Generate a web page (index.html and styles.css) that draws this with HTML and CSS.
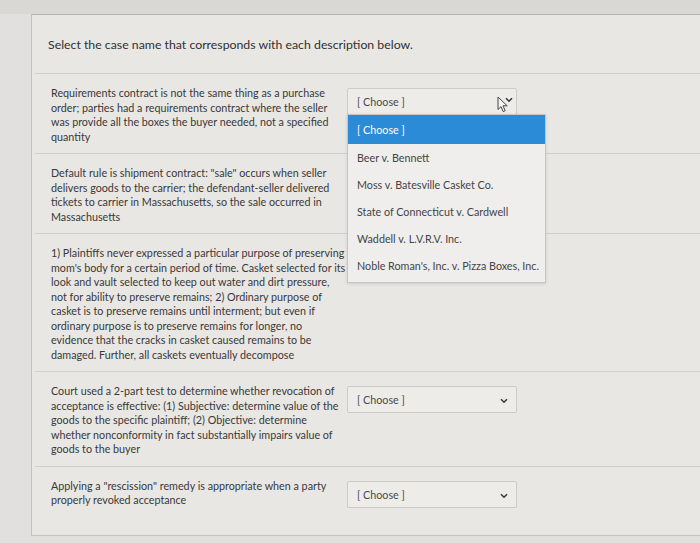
FILE: index.html
```html
<!DOCTYPE html>
<html>
<head>
<meta charset="utf-8">
<link rel="stylesheet" href="styles.css">
</head>
<body>
<div class="page">
  <div class="panel">
    <div class="title">Select the case name that corresponds with each description below.</div>
    <div class="rows">
      <div class="row">
        <div class="desc">Requirements contract is not the same thing as a purchase<br>order; parties had a requirements contract where the seller<br>was provide all the boxes the buyer needed, not a specified<br>quantity</div>
        <div class="select-wrap">
          <div class="select open">
            <span>[ Choose ]</span>
            <svg class="chev" width="8" height="6" viewBox="0 0 8 6"><path d="M1 1.2 L4 4.2 L7 1.2" fill="none" stroke="#3a3a3a" stroke-width="1.6"/></svg>
            <svg class="cursor" width="12" height="17" viewBox="0 0 12 17"><path d="M1 1 L1 13.5 L4 10.6 L6.2 15.6 L8.2 14.7 L6 9.8 L10.2 9.8 Z" fill="#f4f4f4" stroke="#444" stroke-width="1" stroke-linejoin="round"/></svg>
          </div>
          <ul class="menu">
            <li class="active">[ Choose ]</li>
            <li>Beer v. Bennett</li>
            <li>Moss v. Batesville Casket Co.</li>
            <li>State of Connecticut v. Cardwell</li>
            <li>Waddell v. L.V.R.V. Inc.</li>
            <li>Noble Roman's, Inc. v. Pizza Boxes, Inc.</li>
          </ul>
        </div>
      </div>
      <div class="row">
        <div class="desc">Default rule is shipment contract: "sale" occurs when seller<br>delivers goods to the carrier; the defendant-seller delivered<br>tickets to carrier in Massachusetts, so the sale occurred in<br>Massachusetts</div>
      </div>
      <div class="row">
        <div class="desc">1) Plaintiffs never expressed a particular purpose of preserving<br>mom's body for a certain period of time. Casket selected for its<br>look and vault selected to keep out water and dirt pressure,<br>not for ability to preserve remains; 2) Ordinary purpose of<br>casket is to preserve remains until interment; but even if<br>ordinary purpose is to preserve remains for longer, no<br>evidence that the cracks in casket caused remains to be<br>damaged. Further, all caskets eventually decompose</div>
      </div>
      <div class="row">
        <div class="desc">Court used a 2-part test to determine whether revocation of<br>acceptance is effective: (1) Subjective: determine value of the<br>goods to the specific plaintiff; (2) Objective: determine<br>whether nonconformity in fact substantially impairs value of<br>goods to the buyer</div>
        <div class="select-wrap">
          <div class="select">
            <span>[ Choose ]</span>
            <svg class="chev" width="8" height="6" viewBox="0 0 8 6"><path d="M1 1.2 L4 4.2 L7 1.2" fill="none" stroke="#3a3a3a" stroke-width="1.6"/></svg>
          </div>
        </div>
      </div>
      <div class="row last">
        <div class="desc">Applying a "rescission" remedy is appropriate when a party<br>properly revoked acceptance</div>
        <div class="select-wrap">
          <div class="select">
            <span>[ Choose ]</span>
            <svg class="chev" width="8" height="6" viewBox="0 0 8 6"><path d="M1 1.2 L4 4.2 L7 1.2" fill="none" stroke="#3a3a3a" stroke-width="1.6"/></svg>
          </div>
        </div>
      </div>
    </div>
  </div>
</div>
</body>
</html>
```
FILE: styles.css
```css
html, body {
  margin: 0;
  padding: 0;
}
body {
  background: #e1e0de;
  font-family: Lato, "Open Sans", sans-serif;
  color: #3b3b3b;
  width: 700px;
  height: 543px;
  overflow: hidden;
}
.page {
  padding-top: 14px;
  background: linear-gradient(#dad8d5, #dad8d5) top / 100% 14px no-repeat;
}
.panel {
  margin-left: 31px;
  border-left: 1px solid #c4c2bf;
  border-top: 1px solid #b5b3b0;
  border-bottom: 1px solid #c4c2bf;
  background: #e9e7e4;
  height: 522px;
  box-sizing: border-box;
}
.title {
  font-size: 12.3px;
  line-height: 16px;
  padding: 22px 0 20px 16px;
  color: #303030;
}
.rows {
  margin-left: 3px;
}
.row {
  display: flex;
  border-top: 1px solid #d1cfcc;
  padding: 12px 0 9px 16px;
}
.row.last {
  padding-bottom: 26px;
}
.desc {
  width: 296px;
  flex-shrink: 0;
  font-size: 10.75px;
  line-height: 14.5px;
  white-space: nowrap;
  color: #383838;
}
.select-wrap {
  position: relative;
  padding-top: 2px;
}
.select {
  position: relative;
  width: 170px;
  height: 27px;
  box-sizing: border-box;
  border: 1px solid #cdcbc8;
  border-radius: 2px;
  background: #eeece9;
  display: flex;
  align-items: center;
  padding-left: 9px;
  font-size: 10.75px;
  color: #4a4a4a;
}
.chev {
  position: absolute;
  right: 8px;
  top: 11px;
}
.select.open .chev {
  right: 3px;
  top: 8px;
}
.cursor {
  position: absolute;
  left: 149px;
  top: 7px;
}
.menu {
  position: absolute;
  left: 0;
  top: 28px;
  z-index: 2;
  margin: 0;
  padding: 0 0 3px 0;
  list-style: none;
  width: 199px;
  box-sizing: border-box;
  background: #efeeec;
  border: 1px solid #c8c6c3;
  box-shadow: 0 1px 3px rgba(0,0,0,0.12);
}
.menu li {
  height: 27px;
  line-height: 27px;
  padding-left: 9px;
  font-size: 10.75px;
  color: #444;
  white-space: nowrap;
}
.menu li.active {
  height: 29px;
  line-height: 29px;
  background: #2b8bd6;
  color: #fff;
}
```
